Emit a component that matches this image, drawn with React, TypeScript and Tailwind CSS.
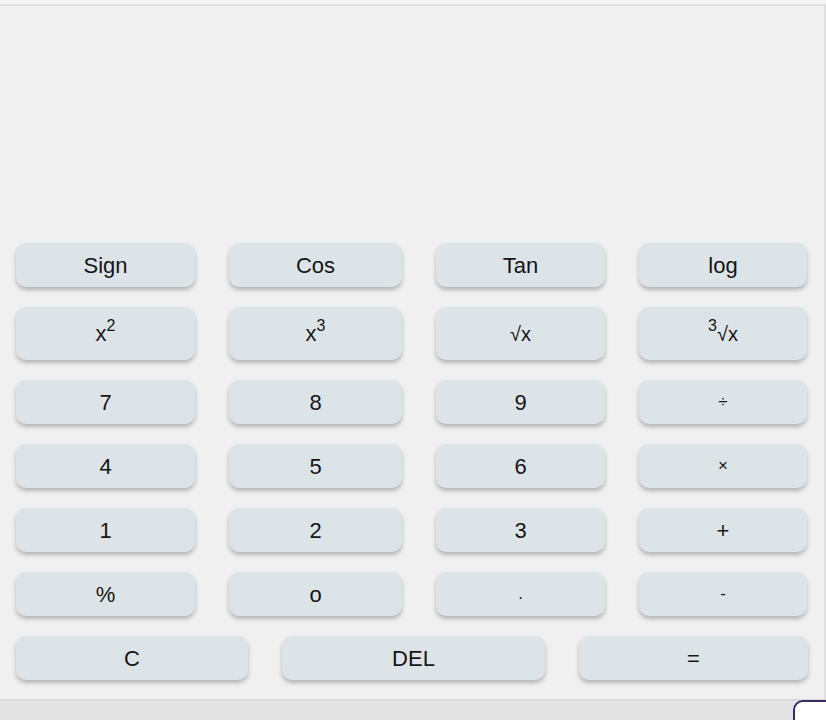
const rows: { label: React.ReactNode; small?: boolean }[][] = [
  [{ label: 'Sign' }, { label: 'Cos' }, { label: 'Tan' }, { label: 'log' }],
  [
    { label: <>x<sup className="text-[16px]">2</sup></> },
    { label: <>x<sup className="text-[16px]">3</sup></> },
    { label: <span className="text-[20px]">√x</span> },
    { label: <><sup className="text-[16px]">3</sup><span className="text-[20px]">√x</span></> },
  ],
  [{ label: '7' }, { label: '8' }, { label: '9' }, { label: '÷', small: true }],
  [{ label: '4' }, { label: '5' }, { label: '6' }, { label: '×', small: true }],
  [{ label: '1' }, { label: '2' }, { label: '3' }, { label: '+' }],
  [{ label: '%' }, { label: 'o' }, { label: '.', small: true }, { label: '-', small: true }],
];

const widths = ['w-[179px]', 'w-[173px]', 'w-[169px]', 'w-[168px]'];

function Key({ children, className }: { children: React.ReactNode; className: string }) {
  return (
    <button
      className={`${className} flex items-center justify-center rounded-[10px] bg-[#dde4e8] text-[#151515] shadow-[0_3px_4px_rgba(0,0,0,0.25)]`}
    >
      {children}
    </button>
  );
}

export default function App() {
  return (
    <div
      className="relative h-[720px] w-[826px] overflow-hidden bg-[#f0f0f0] text-[22px]"
      style={{ fontFamily: '"Liberation Sans", Arial, sans-serif' }}
    >
      <div className="h-[4px] bg-[#f4f4f4]" />
      <div className="flex h-[695px] flex-col border-t-2 border-r-2 border-[#e0e0e0]">
        <div className="h-[237px]" />
        <div className="flex flex-col gap-5 pl-[16px]">
          {rows.map((row, i) => (
            <div key={i} className="flex gap-[34px]">
              {row.map((k, j) => (
                <Key key={j} className={`${widths[j]} ${i === 1 ? 'h-[53px]' : 'h-[44px]'} ${k.small ? 'text-[17px]' : ''}`}>
                  {k.label}
                </Key>
              ))}
            </div>
          ))}
          <div className="flex gap-[34px]">
            <Key className="h-[44px] w-[232px]">C</Key>
            <Key className="h-[44px] w-[263px]">DEL</Key>
            <Key className="h-[44px] w-[229px]">=</Key>
          </div>
        </div>
      </div>
      <div className="h-[21px] border-t-2 border-[#d9d9d9] bg-[#e4e4e4]" />
      <div className="absolute left-[793px] top-[700px] h-[40px] w-[60px] rounded-tl-[10px] border-2 border-[#372a66] bg-white" />
    </div>
  );
}
